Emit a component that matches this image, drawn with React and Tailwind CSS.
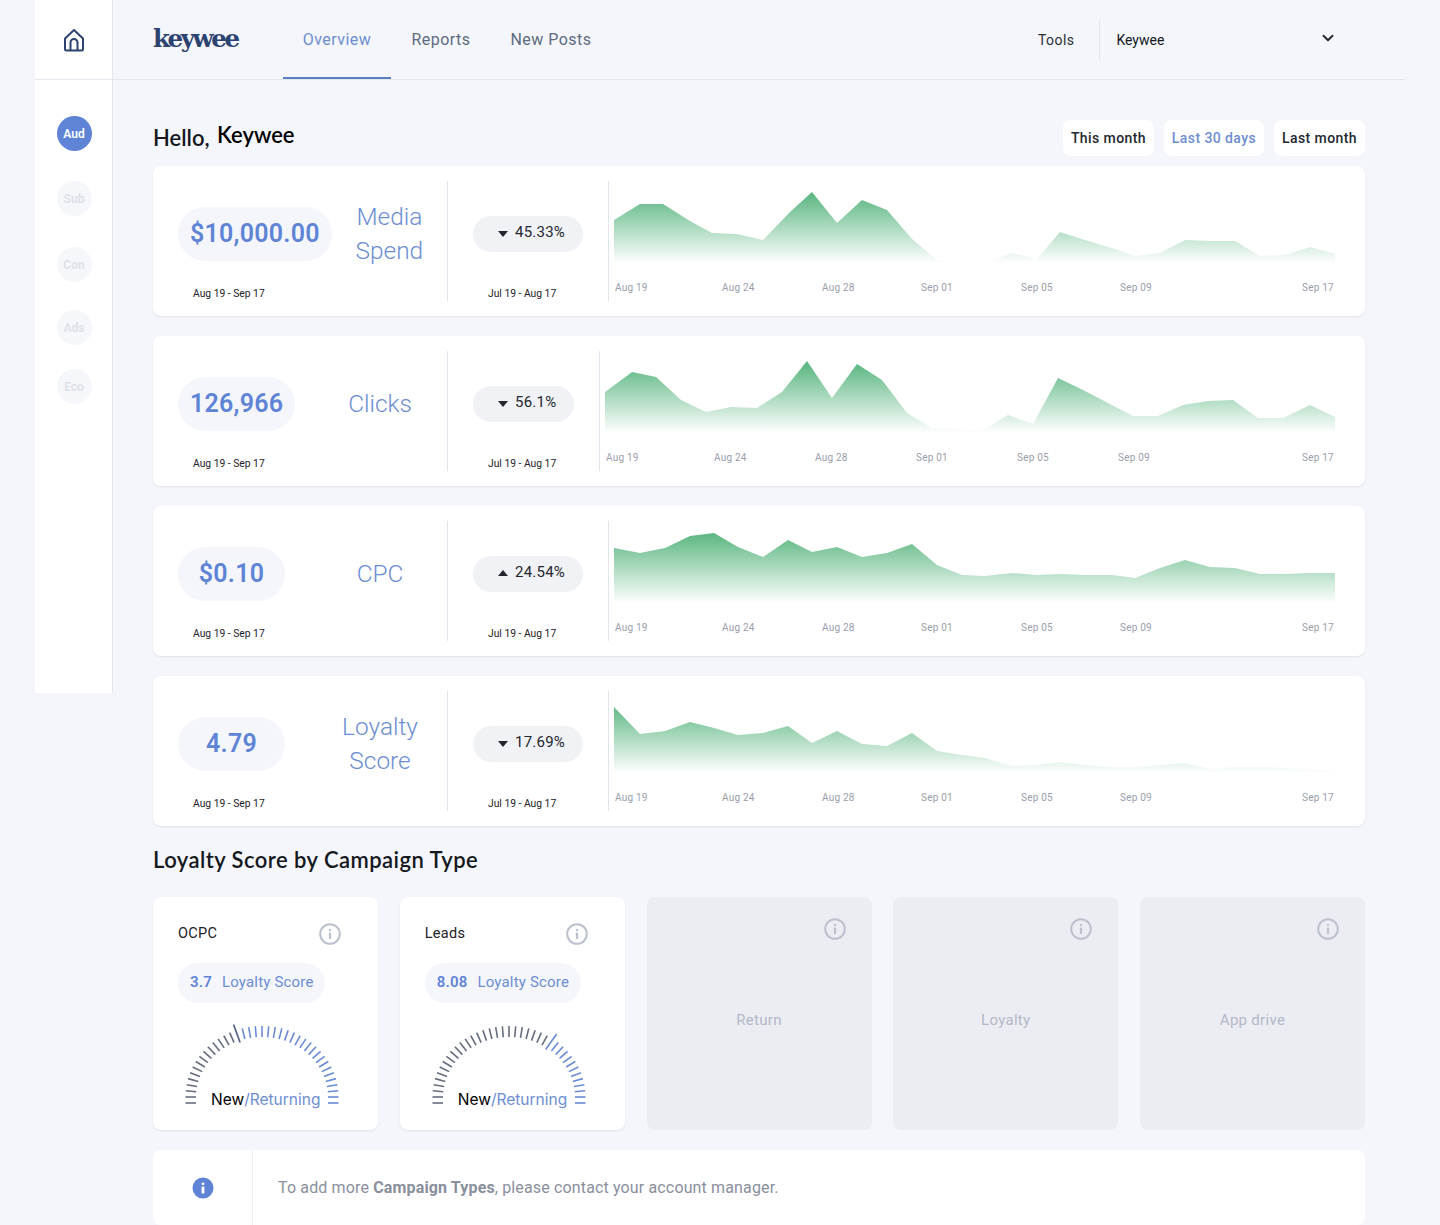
import { ChevronDown } from "lucide-react";

const font = "font-['Roboto',sans-serif]";

const sideItems = [
  { label: "Aud", active: true, gap: "mt-[36px]" },
  { label: "Sub", gap: "mt-[30px]" },
  { label: "Con", gap: "mt-[31px]" },
  { label: "Ads", gap: "mt-[28px]" },
  { label: "Eco", gap: "mt-[24px]" },
];

const ticksOne = [
  ["Aug 19", 615], ["Aug 24", 722], ["Aug 28", 822], ["Sep 01", 921],
  ["Sep 05", 1021], ["Sep 09", 1120], ["Sep 17", 1302],
];
const ticksTwo = [
  ["Aug 19", 606], ["Aug 24", 714], ["Aug 28", 815], ["Sep 01", 916],
  ["Sep 05", 1017], ["Sep 09", 1118], ["Sep 17", 1302],
];

// chart points are page coordinates read off the design, top = top of the plot
const metrics = [
  {
    value: "$10,000.00",
    label: ["Media", "Spend"],
    change: "45.33%",
    up: false,
    top: 181,
    ticks: ticksOne,
    points: [[614,220],[640,204],[663,204],[690,221],[712,233],[737,234],[763,240],[790,212],[812,192],[837,223],[862,200],[887,210],[912,239],[937,260],[960,263],[985,263],[1012,253],[1037,259],[1060,232],[1085,240],[1112,248],[1135,256],[1160,253],[1185,240],[1210,241],[1235,241],[1260,256],[1285,255],[1310,247],[1335,254]],
  },
  {
    value: "126,966",
    label: ["Clicks"],
    change: "56.1%",
    up: false,
    top: 351,
    ticks: ticksTwo,
    points: [[605,392],[632,372],[656,377],[681,400],[706,412],[731,407],[757,408],[782,392],[807,361],[832,398],[857,364],[882,380],[907,413],[932,428],[957,429],[982,431],[1008,415],[1033,424],[1058,378],[1083,390],[1108,403],[1133,416],[1158,416],[1183,405],[1208,401],[1233,400],[1258,418],[1283,418],[1310,405],[1335,417]],
  },
  {
    value: "$0.10",
    label: ["CPC"],
    change: "24.54%",
    up: true,
    top: 521,
    ticks: ticksOne,
    points: [[614,548],[640,553],[665,548],[690,536],[714,533],[738,547],[763,557],[788,540],[812,552],[837,547],[862,557],[887,553],[912,544],[937,565],[962,575],[985,576],[1012,573],[1037,575],[1060,574],[1085,575],[1112,575],[1135,578],[1160,568],[1185,560],[1210,567],[1235,568],[1260,574],[1285,574],[1310,573],[1335,573]],
  },
  {
    value: "4.79",
    label: ["Loyalty", "Score"],
    change: "17.69%",
    up: false,
    top: 691,
    ticks: ticksOne,
    points: [[614,707],[640,734],[665,731],[690,722],[714,728],[738,735],[763,733],[788,726],[812,743],[837,731],[862,744],[887,746],[912,733],[937,751],[962,755],[985,758],[1012,766],[1037,765],[1060,762],[1085,765],[1112,767],[1135,767],[1160,765],[1185,763],[1210,769],[1235,767],[1260,767],[1285,768],[1310,769],[1335,771]],
  },
];

function AreaChart({ points, top, ticks, id }) {
  const left = points[0][0];
  const base = 82;
  const line = points.map(([x, y]) => `${x - left},${y - top}`).join(" ");
  const width = 1335 - left;
  return (
    <svg width={width + 2} height="120" className="block">
      <defs>
        <linearGradient id={id} gradientUnits="userSpaceOnUse" x1="0" y1="14" x2="0" y2={base}>
          <stop offset="0" stopColor="#5fb884" />
          <stop offset="1" stopColor="#5fb884" stopOpacity="0" />
        </linearGradient>
      </defs>
      <polygon points={`0,${base} ${line} ${width},${base}`} fill={`url(#${id})`} />
      {ticks.map(([text, x]) => (
        <text key={text} x={x - left} y="110" fontSize="10" letterSpacing="0.2" fill="#9a9eab" fontFamily="Roboto, sans-serif">
          {text}
        </text>
      ))}
    </svg>
  );
}

function MetricCard({ metric, index }) {
  return (
    <div className="flex h-[150px] rounded-lg bg-white py-[15px] shadow-[0_1px_2px_rgba(50,60,90,0.1)]">
      <div className="w-[295px] shrink-0 border-r border-[#e3e5ec] pl-[25px] pt-[26px]">
        <div className="flex h-[54px] items-center">
          <div className="min-w-[135px]">
            <div className="inline-flex h-[54px] min-w-[107px] items-center justify-center rounded-full bg-[#f4f6fb] px-[12px] text-[25px] font-semibold tracking-[0.01em] text-[#5f84d6]">
              {metric.value}
            </div>
          </div>
          <div className="flex-1 text-center text-[24.4px] leading-[34px] font-light text-[#6d8ed3]">
            {metric.label.map((l) => (
              <div key={l}>{l}</div>
            ))}
          </div>
        </div>
        <div className="mt-[27px] pl-[15px] text-[10.3px] leading-[12px] text-[#1d2128]">Aug 19 - Sep 17</div>
      </div>
      <div className="shrink-0 border-r border-[#e3e5ec] px-[25px] pt-[35px]">
        <div className="flex h-[36px] items-center rounded-full bg-[#f1f2f6] pr-[18px] pl-[25px] pb-[3px] text-[15px] tracking-[0.015em] text-[#23272f]">
          <span
            className={
              metric.up
                ? "mr-[7px] h-0 w-0 border-x-[5.5px] border-b-[6px] border-x-transparent border-b-[#23272f]"
                : "mr-[7px] mt-[3px] h-0 w-0 border-x-[5.5px] border-t-[6px] border-x-transparent border-t-[#23272f]"
            }
          />
          {metric.change}
        </div>
        <div className="mt-[36px] pl-[15px] text-[10.3px] leading-[12px] text-[#1d2128]">Jul 19 - Aug 17</div>
      </div>
      <div className="flex-1 pl-[5px]">
        <AreaChart points={metric.points} top={metric.top} ticks={metric.ticks} id={`area-${index}`} />
      </div>
    </div>
  );
}

function InfoIcon({ className }) {
  return (
    <svg width="22" height="22" viewBox="0 0 22 22" className={className}>
      <circle cx="11" cy="11" r="9.8" fill="none" stroke="#bcc1ce" strokeWidth="2" />
      <circle cx="11" cy="7" r="1.2" fill="#bcc1ce" />
      <rect x="9.9" y="9.6" width="2.2" height="6.4" rx="0.6" fill="#bcc1ce" />
    </svg>
  );
}

function Gauge({ marker, markerColor }) {
  const cx = 80;
  const cy = 78;
  const ticks = [];
  for (let a = 180; a >= 0; a -= 5) {
    const rad = (a * Math.PI) / 180;
    const isMarker = a === marker;
    const innerX = isMarker ? 64 : 66;
    const innerY = isMarker ? 58 : 60;
    const outerX = isMarker ? 83 : 76.5;
    const outerY = isMarker ? 77 : 71;
    let color = a > marker ? "#666d7d" : "#6a8bd4";
    if (isMarker) color = markerColor;
    ticks.push(
      <line
        key={a}
        x1={cx + innerX * Math.cos(rad)}
        y1={cy - innerY * Math.sin(rad)}
        x2={cx + outerX * Math.cos(rad)}
        y2={cy - outerY * Math.sin(rad)}
        stroke={color}
        strokeWidth="1.6"
      />
    );
  }
  return (
    <svg width="160" height="92" className="block">
      {ticks}
      <line x1="3.5" y1="84" x2="14" y2="84" stroke="#666d7d" strokeWidth="1.6" />
      <line x1="146" y1="84" x2="156.5" y2="84" stroke="#6a8bd4" strokeWidth="1.6" />
    </svg>
  );
}

function CampaignCard({ name, score, marker, markerColor, pillWidth }) {
  return (
    <div className="relative h-[233px] w-[225px] rounded-lg bg-white px-[25px] pt-[26px] shadow-[0_1px_2px_rgba(50,60,90,0.1)]">
      <div className="flex items-center justify-between pr-[12px] text-[14.5px] leading-[18px] tracking-[0.02em] text-[#1d2128]">
        {name}
        <InfoIcon />
      </div>
      <div className={`mt-[18px] flex h-[40px] items-center rounded-full bg-[#f4f6fb] pb-[2px] pl-[12px] text-[15px] tracking-[0.012em] text-[#6d8ed3] ${pillWidth}`}>
        <span className="mr-[10px] font-semibold text-[#5f84d6]">{score}</span>Loyalty Score
      </div>
      <div className="mt-[16px] ml-[4px]">
        <Gauge marker={marker} markerColor={markerColor} />
      </div>
      <div className="absolute left-[58px] top-[193px] font-['Inter',sans-serif] text-[15.5px] leading-[20px] text-[#6d8ed3]">
        <span className="text-black">New</span>/Returning
      </div>
    </div>
  );
}

function EmptyCard({ name }) {
  return (
    <div className="relative flex h-[233px] w-[225px] items-center justify-center rounded-lg bg-[#ecedf3] pt-[14px] text-[15px] tracking-[0.02em] text-[#b3b8c8]">
      {name}
      <InfoIcon className="absolute right-[26px] top-[21px]" />
    </div>
  );
}

export default function App() {
  return (
    <div className={`flex h-[1225px] overflow-hidden bg-[#f4f6fb] pl-[35px] pr-[35px] ${font}`}>
      <aside className="h-[693px] w-[78px] shrink-0 border-r border-[#e3e5ec] bg-white">
        <div className="flex h-[80px] items-center justify-center border-b border-[#e3e5ec]">
          <svg width="22" height="24" viewBox="0 0 22 24" fill="none" stroke="#2c4270" strokeWidth="2" strokeLinejoin="round">
            <path d="M2 10.5 L11 2 L20 10.5 V21 A1.5 1.5 0 0 1 18.5 22.5 H3.5 A1.5 1.5 0 0 1 2 21 Z" />
            <path d="M7.5 22.5 V14.5 A3.5 3.5 0 0 1 14.5 14.5 V22.5" />
          </svg>
        </div>
        <div className="flex flex-col items-center pl-[1px]">
          {sideItems.map((item) => (
            <div
              key={item.label}
              className={`flex h-[35px] w-[35px] items-center justify-center rounded-full text-[12px] font-semibold ${item.gap} ${
                item.active ? "bg-[#5f84d6] text-white" : "bg-[#f6f7fb] text-[#dde0e8]"
              }`}
            >
              {item.label}
            </div>
          ))}
        </div>
      </aside>

      <div className="min-w-0 flex-1">
        <header className="flex h-[80px] items-center border-b border-[#e3e5ec] pl-[40px]">
          <div className="w-[130px] font-['DejaVu_Serif',serif] text-[24.5px] font-bold tracking-[-2.4px] text-[#2c4270]">
            keywee
          </div>
          <nav className="flex h-full text-[16px] tracking-[0.03em] text-[#5e6b80]">
            <div className="flex h-full w-[108px] items-center justify-center border-b-2 border-[#5b7fc7] pt-[2px] text-[#6d8ed3]">Overview</div>
            <div className="flex h-full w-[100px] items-center justify-center">Reports</div>
            <div className="flex h-full w-[120px] items-center justify-center">New Posts</div>
          </nav>
          <div className="ml-[427px] pt-[2px] text-[14px] tracking-[0.03em] text-[#2a2e36]">Tools</div>
          <div className="ml-[25px] flex h-[40px] items-center border-l border-[#e3e5ec] pl-[16px] pt-[2px] text-[14px] text-[#15181d]">
            Keywee
            <ChevronDown size={18} strokeWidth={2.5} className="mb-[6px] ml-[155px] text-[#23272f]" />
          </div>
        </header>

        <div className="px-[40px]">
          <div className="flex h-[86px] items-end justify-between pb-[10px]">
            <h1 className="pb-[4px] font-['Lato',sans-serif] text-[22px] leading-[28px] font-semibold text-[#15181d]">
              Hello, <span className="relative -top-[3px] ml-[2px] text-black">Keywee</span>
            </h1>
            <div className="flex gap-[10px] text-[14px] font-medium tracking-[0.03em]">
              <div className="flex h-[36px] w-[91px] items-center justify-center rounded-lg bg-white text-[#23272f]">This month</div>
              <div className="flex h-[36px] w-[100px] items-center justify-center rounded-lg bg-white text-[#6d8ed3]">Last 30 days</div>
              <div className="flex h-[36px] w-[91px] items-center justify-center rounded-lg bg-white text-[#23272f]">Last month</div>
            </div>
          </div>

          <div className="flex flex-col gap-[20px]">
            {metrics.map((m, i) => (
              <MetricCard key={m.value} metric={m} index={i} />
            ))}
          </div>

          <h2 className="mt-[19px] font-['Lato',sans-serif] text-[22px] leading-[30px] font-semibold tracking-[0.45px] text-[#15181d]">
            Loyalty Score by Campaign Type
          </h2>

          <div className="mt-[22px] flex justify-between">
            <CampaignCard name="OCPC" score="3.7" marker={110} markerColor="#4f5f86" pillWidth="w-[147px]" />
            <CampaignCard name="Leads" score="8.08" marker={55} markerColor="#6a8bd4" pillWidth="w-[156px]" />
            <EmptyCard name="Return" />
            <EmptyCard name="Loyalty" />
            <EmptyCard name="App drive" />
          </div>

          <div className="mt-[20px] flex h-[75px] items-center rounded-lg bg-white">
            <div className="flex h-full w-[100px] items-center justify-center border-r border-[#eceef3]">
              <svg width="22" height="22" viewBox="0 0 22 22">
                <circle cx="11" cy="11" r="10.5" fill="#5f84d6" />
                <circle cx="11" cy="6.8" r="1.4" fill="white" />
                <rect x="9.6" y="9.4" width="2.8" height="7" rx="0.5" fill="white" />
              </svg>
            </div>
            <p className="pl-[25px] text-[16px] tracking-[0.009em] text-[#8a8f9c]">
              To add more <b className="font-bold">Campaign Types</b>, please contact your account manager.
            </p>
          </div>
        </div>
      </div>
    </div>
  );
}
